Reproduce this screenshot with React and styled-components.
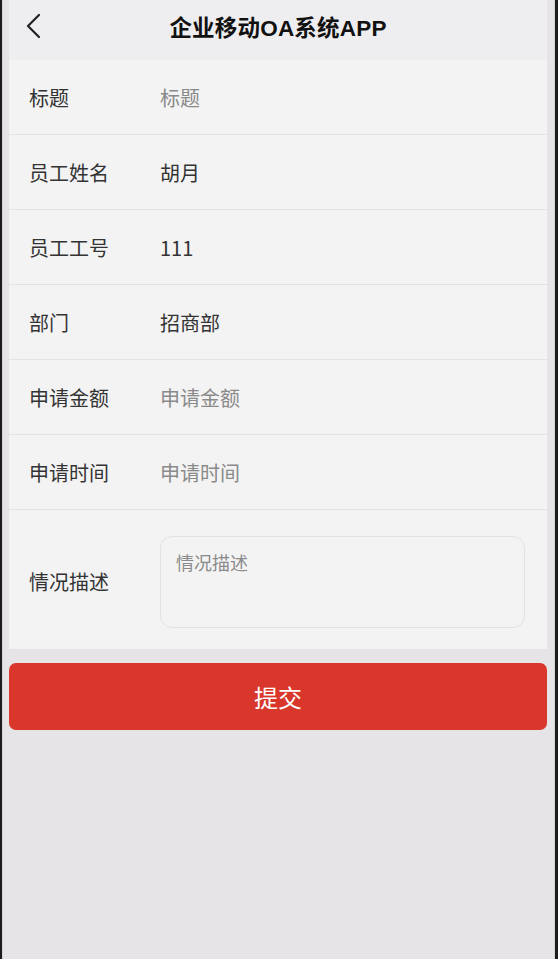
import React from 'react'
import styled, { createGlobalStyle } from 'styled-components'

const GlobalStyle = createGlobalStyle`
  html, body {
    margin: 0;
    padding: 0;
    background: #1c1c1c;
  }
  body {
    font-family: "Microsoft YaHei", "Noto Sans CJK SC", "Liberation Sans", sans-serif;
  }
  * { box-sizing: border-box; }
`

const Frame = styled.div`
  height: 959px;
  margin: 0 3px 0 2px;
  padding: 0 7px 0 6px;
  background: #e6e4e6;
  border-left: 1px solid #d6d4d6;
  border-right: 1px solid #d6d4d6;
  display: flex;
  flex-direction: column;
`

const Header = styled.header`
  height: 60px;
  padding-bottom: 8px;
  background: #eeedef;
  display: flex;
  align-items: center;
  justify-content: center;
  position: relative;
`

const Back = styled.button`
  position: absolute;
  left: 10px;
  top: 12px;
  width: 28px;
  height: 28px;
  border: 0;
  padding: 0;
  background: none;
  display: flex;
  align-items: center;
  justify-content: center;
`

const Title = styled.h1`
  margin: 0;
  font-family: "Liberation Sans", "Noto Sans CJK SC", sans-serif;
  font-size: 22.5px;
  font-weight: 700;
  letter-spacing: 0.2px;
  color: #111;
`

const Form = styled.div`
  background: #f3f3f3;
  display: flex;
  flex-direction: column;
`

const Row = styled.div`
  display: flex;
  align-items: center;
  min-height: ${p => (p.$tall ? '139px' : '75px')};
  padding: ${p => (p.$tall ? '25px 0 21px' : '0')};
  border-bottom: ${p => (p.$last ? 'none' : '1px solid #e3e3e3')};
`

const Label = styled.div`
  width: 151px;
  padding-left: 20px;
  font-size: 20px;
  color: #333;
`

const Value = styled.div`
  font-size: 20px;
  color: ${p => (p.$placeholder ? '#8a8a8a' : '#333')};
`

const Area = styled.div`
  flex: 1;
  margin-right: 22px;
  height: 92px;
  border: 1px solid #e2e2e2;
  border-radius: 12px;
  padding: 12px 15px;
  font-size: 18px;
  color: #8a8a8a;
`

const Submit = styled.button`
  margin-top: 14px;
  height: 67px;
  width: 100%;
  border: 0;
  border-radius: 7px;
  background: #d9372b;
  color: #fff;
  font-family: inherit;
  font-size: 24px;
`

const fields = [
  { label: '标题', value: '标题', placeholder: true },
  { label: '员工姓名', value: '胡月' },
  { label: '员工工号', value: '111' },
  { label: '部门', value: '招商部' },
  { label: '申请金额', value: '申请金额', placeholder: true },
  { label: '申请时间', value: '申请时间', placeholder: true },
]

export default function App() {
  return (
    <>
      <GlobalStyle />
      <Frame>
        <Header>
          <Back aria-label="返回">
            <svg width="18" height="26" viewBox="0 0 18 26" fill="none">
              <path d="M15 2 L4 13 L15 24" stroke="#222" strokeWidth="2.2" strokeLinecap="round" strokeLinejoin="round" />
            </svg>
          </Back>
          <Title>企业移动OA系统APP</Title>
        </Header>
        <Form>
          {fields.map(f => (
            <Row key={f.label}>
              <Label>{f.label}</Label>
              <Value $placeholder={f.placeholder}>{f.value}</Value>
            </Row>
          ))}
          <Row $tall $last>
            <Label>情况描述</Label>
            <Area>情况描述</Area>
          </Row>
        </Form>
        <Submit>提交</Submit>
      </Frame>
    </>
  )
}
